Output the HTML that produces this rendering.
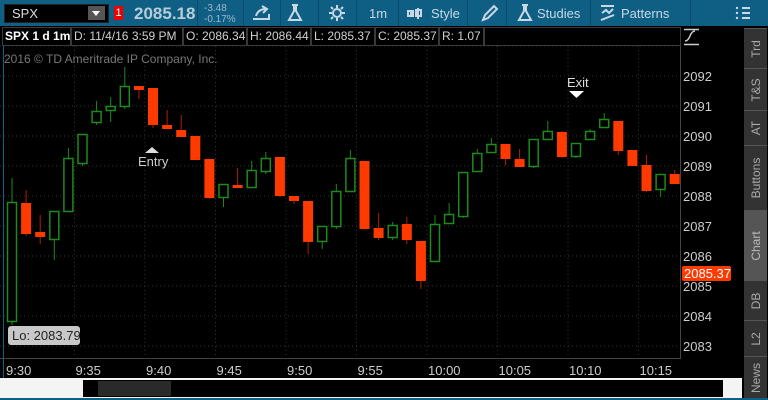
<!DOCTYPE html>
<html><head><meta charset="utf-8"><style>
*{margin:0;padding:0;box-sizing:border-box}
body{width:768px;height:400px;background:#000;overflow:hidden;font-family:"Liberation Sans",sans-serif;position:relative}
.tb{position:absolute;left:0;top:0;width:768px;height:26px;background:#0f5f85}
.ib{position:absolute;top:27px;height:19px;border:1px solid #3a3a3a;color:#d0d0d0;font-size:12px;line-height:17px;padding-left:2px;white-space:nowrap;overflow:hidden}
.tab{position:absolute;left:744px;width:23px;background:#333;border-top:1px solid #555;color:#aaa;font-size:12px}
.tab span{position:absolute;left:50%;top:50%;transform:translate(-50%,-50%) rotate(-90deg);white-space:nowrap}
.sep{position:absolute;top:0;width:1px;height:26px;background:#0a4a6a}
</style></head><body>
<div class="tb"></div>
<div style="position:absolute;left:4px;top:4px;width:105px;height:19px;background:#000;border:1px solid #222"></div>
<div style="position:absolute;left:12px;top:6px;color:#ddd;font-size:13px">SPX</div>
<div style="position:absolute;left:88px;top:6px;width:17px;height:14px;background:#555"></div>
<div style="position:absolute;left:92px;top:11px;width:0;height:0;border-left:4px solid transparent;border-right:4px solid transparent;border-top:5px solid #fff"></div>
<div style="position:absolute;left:114px;top:6px;width:9px;height:14px;background:#e00;color:#fff;font-size:11px;text-align:center;line-height:14px">1</div>
<div style="position:absolute;left:134px;top:4px;color:#b8ccd8;font-size:17px;font-weight:bold">2085.18</div>
<div style="position:absolute;left:204px;top:3px;color:#9fb8c8;font-size:10px;line-height:11px">-3.48<br>-0.17%</div>
<div class="sep" style="left:197px"></div><div class="sep" style="left:243px"></div><div class="sep" style="left:280px"></div><div class="sep" style="left:318px"></div><div class="sep" style="left:356px"></div><div class="sep" style="left:398px"></div><div class="sep" style="left:467px"></div><div class="sep" style="left:506px"></div><div class="sep" style="left:590px"></div><div class="sep" style="left:690px"></div>
<svg style="position:absolute;left:0;top:0" width="768" height="26">
<g fill="none" stroke="#c8d8e4" stroke-width="2"><path d="M253 19h16v-5M256 16q2-7 10-7M262 6l5 3-4 4"/>
<path d="M292 5h6M294 5v6l-5 9h12l-5-9v-6"/>
<circle cx="337" cy="13" r="4"/><path d="M337 5v3M337 18v3M329 13h3M342 13h3M331 7l2 2M341 17l2 2M343 7l-2 2M333 17l-2 2"/>
<path d="M411 10v7M418 8v11"/><rect x="408" y="11" width="5" height="5"/><rect x="416" y="10" width="5" height="6"/>
<path d="M483 20l2-5 9-9 3 3-9 9z"/>
<path d="M522 5h6M524 5v6l-5 9h12l-5-9v-6"/>
<path d="M601 6h13M602 13l4-3 3 3 4-4M601 20l13-5"/>
<path d="M742 8h8M742 13h8M742 18h8"/></g>
<g fill="#c8d8e4" font-size="13" font-family="Liberation Sans"><text x="369" y="18">1m</text><text x="431" y="18">Style</text><text x="537" y="18">Studies</text><text x="621" y="18">Patterns</text></g>
<circle cx="737" cy="8" r="1.2" fill="#c8d8e4"/><circle cx="737" cy="13" r="1.2" fill="#c8d8e4"/><circle cx="737" cy="18" r="1.2" fill="#c8d8e4"/>
</svg>
<div class="ib" style="left:2px;width:69px;color:#fff;font-weight:bold">SPX 1 d 1m</div>
<div class="ib" style="left:71px;width:112px">D: 11/4/16 3:59 PM</div>
<div class="ib" style="left:183px;width:64px">O: 2086.34</div>
<div class="ib" style="left:247px;width:64px">H: 2086.44</div>
<div class="ib" style="left:311px;width:64px">L: 2085.37</div>
<div class="ib" style="left:375px;width:64px">C: 2085.37</div>
<div class="ib" style="left:439px;width:45px">R: 1.07</div>
<div class="ib" style="left:484px;width:197px"></div>
<svg id="ch" style="position:absolute;left:0;top:0" width="744" height="400"></svg>
<div style="position:absolute;left:4px;top:52px;color:#777;font-size:12px">2016 © TD Ameritrade IP Company, Inc.</div>
<div class="tab" style="top:28px;height:40px"><span>Trd</span></div>
<div class="tab" style="top:68px;height:42px"><span>T&amp;S</span></div>
<div class="tab" style="top:110px;height:35px"><span>AT</span></div>
<div class="tab" style="top:145px;height:65px"><span>Buttons</span></div>
<div class="tab" style="top:210px;height:70px;background:#555;color:#bbb"><span>Chart</span></div>
<div class="tab" style="top:280px;height:40px"><span>DB</span></div>
<div class="tab" style="top:320px;height:36px"><span>L2</span></div>
<div class="tab" style="top:356px;height:42px"><span>News</span></div>
<div style="position:absolute;left:0;top:378px;width:742px;height:20px;background:#f4f4f4"></div>
<div style="position:absolute;left:83px;top:380px;width:640px;height:17px;background:#000"></div>
<div style="position:absolute;left:98px;top:381px;width:73px;height:15px;background:#2a2a2a"></div>
<div style="position:absolute;left:0;top:398px;width:768px;height:2px;background:#0f5f85"></div>
<script>
var s=document.getElementById('ch'),h='';
for(var k=0;k<=10;k++){var y=46+30*k;h+='<line x1="0" x2="680" y1="'+y+'" y2="'+y+'" stroke="#333" stroke-dasharray="1,3"/>';}
var tl=['9:30','9:35','9:40','9:45','9:50','9:55','10:00','10:05','10:10','10:15'];
for(var i=0;i<10;i++){var x=4+70.5*i;if(i>0)h+='<line x1="'+x+'" x2="'+x+'" y1="46" y2="358" stroke="#333" stroke-dasharray="1,3"/>';h+='<text x="'+(x+(i?1:2))+'" y="375" fill="#ccc" font-size="13" font-family="Liberation Sans">'+tl[i]+'</text>';}
h+='<line x1="680.5" x2="680.5" y1="46" y2="358" stroke="#444"/><line x1="0" x2="681" y1="358.5" y2="358.5" stroke="#444"/><line x1="3.5" x2="3.5" y1="46" y2="378" stroke="#0f5f85"/>';
for(var p=2092;p>=2083;p--){h+='<text x="683" y="'+(81+30*(2092-p))+'" fill="#ccc" font-size="13" font-family="Liberation Sans">'+p+'</text>';}
var c=[['g',202,322,178,325],['r',203,234,190,236],['r',232,237,215,244],['g',211,240,211,260],['g',158,212,148,212],['g',134,164,134,166],['g',111,123,101,125],['g',106,111,97,122],['g',86,107,67,109],['r',86,90,86,99],['r',88,125,88,128],['r',125,129,110,129],['r',130,137,115,137],['r',136,160,136,160],['r',159,198,159,199],['g',184,198,184,207],['r',185,188,168,188],['g',170,188,161,188],['g',158,172,152,174],['r',157,196,157,197],['r',196,201,196,204],['r',201,242,201,254],['g',226,242,226,249],['g',191,227,184,229],['g',158,192,150,192],['r',161,229,161,229],['r',228,238,213,240],['g',225,238,222,240],['r',224,240,217,244],['r',241,281,241,289],['g',224,262,215,262],['g',214,224,203,224],['g',172,217,172,218],['g',153,172,149,172],['g',144,153,138,153],['r',144,159,144,165],['r',159,167,149,167],['g',139,167,139,168],['g',131,140,121,140],['r',132,157,131,158],['g',143,157,143,158],['g',131,140,129,140],['g',119,128,113,128],['r',121,151,121,155],['r',150,166,150,166],['r',165,191,155,192],['g',174,190,174,197],['r',174,184,170,184]];
for(var i=0;i<c.length;i++){var d=c[i],x=12+14.1*i,col=d[0]=='g'?'#1c8a1c':'#ff3a00';
h+='<line x1="'+x+'" x2="'+x+'" y1="'+d[3]+'" y2="'+d[4]+'" stroke="'+(d[0]=='g'?col:'#b02000')+'"/>';
if(d[0]=='g')h+='<rect x="'+(x-4.5)+'" y="'+(d[1]+.5)+'" width="9" height="'+(d[2]-d[1]-1)+'" fill="#000" stroke="'+col+'" stroke-width="1.5"/>';
else h+='<rect x="'+(x-5)+'" y="'+d[1]+'" width="10" height="'+Math.max(3,d[2]-d[1])+'" fill="'+col+'"/>';}
h+='<path d="M145 153l7-6 7 6z" fill="#ddd"/><text x="138" y="166" fill="#ccc" font-size="13" font-family="Liberation Sans">Entry</text>';
h+='<text x="567" y="87" fill="#ddd" font-size="13" font-family="Liberation Sans">Exit</text><path d="M569 91h15l-7.5 7z" fill="#fff"/>';
h+='<rect x="682" y="266" width="49" height="15" rx="2" fill="#ff3a00"/><text x="684" y="278" fill="#fff" font-size="13" font-family="Liberation Sans">2085.37</text>';
h+='<rect x="8" y="326" width="72" height="19" rx="3" fill="#c8c8c8"/><text x="12" y="340" fill="#222" font-size="13" font-family="Liberation Sans">Lo: 2083.79</text>';
h+='<g fill="none" stroke="#ccc" stroke-width="1.5"><path d="M684 29.5h15M684 44.5h15M685 41q3-0 5-5t5-5"/></g><g fill="none" stroke="#c8c8c8" stroke-width="1.5"><circle cx="12" cy="388" r="6"/><path d="M12 381v14M5 388h14"/><circle cx="31" cy="387" r="5.5"/><path d="M35 391l4 5M28 387h6M31 384v6"/><circle cx="51" cy="387" r="5.5"/><path d="M55 391l4 5M48 387h6"/></g><path d="M68 380v15l4-4 3 6 2-1-3-6h5z" fill="#c8c8c8"/>';
h+='<path d="M91 386l3-2v4z" fill="#aaa"/><path d="M134 385v5M136 385v5M138 385v5" stroke="#888"/><path d="M702 386l-3 2 3 2zM713 386l3 2-3 2z" fill="#888"/>';
s.innerHTML=h;
</script>
</body></html>
